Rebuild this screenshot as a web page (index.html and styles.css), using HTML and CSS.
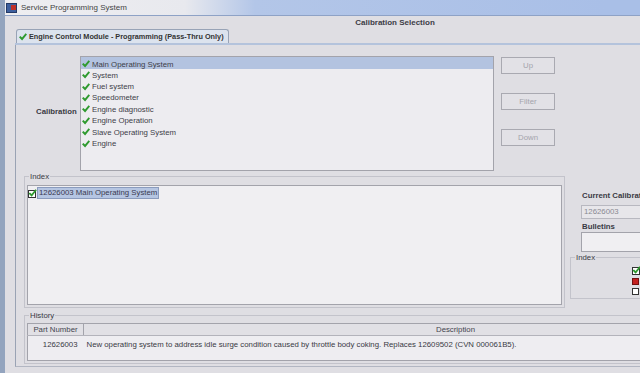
FILE: index.html
```html
<!DOCTYPE html>
<html lang="en">
<head>
    <meta charset="UTF-8">
    <title>Service Programming System</title>
    <link rel="stylesheet" href="styles.css">
</head>
<body>
    <div class="window">
        <div class="titlebar">
            <span class="app_icon"><span class="app_icon_red"></span></span>
            <span class="title">Service Programming System</span>
        </div>
        <div class="header">Calibration Selection</div>
        <div class="tabs">
            <div class="tab">
                <svg class="check" viewBox="0 0 8 8"><path d="M0 4.3 L1.5 3.1 L3 4.6 L6.6 0.3 L8 1.4 L3.1 7.6 Z"/></svg>
                Engine Control Module - Programming (Pass-Thru Only)
            </div>
        </div>

        <div class="tab_body">
            <div class="calib_row">
                <div class="calib_label">Calibration</div>
                <ul class="calib_list">
                    <li class="selected"><svg class="check" viewBox="0 0 8 8"><path d="M0 4.3 L1.5 3.1 L3 4.6 L6.6 0.3 L8 1.4 L3.1 7.6 Z"/></svg>Main Operating System</li>
                    <li><svg class="check" viewBox="0 0 8 8"><path d="M0 4.3 L1.5 3.1 L3 4.6 L6.6 0.3 L8 1.4 L3.1 7.6 Z"/></svg>System</li>
                    <li><svg class="check" viewBox="0 0 8 8"><path d="M0 4.3 L1.5 3.1 L3 4.6 L6.6 0.3 L8 1.4 L3.1 7.6 Z"/></svg>Fuel system</li>
                    <li><svg class="check" viewBox="0 0 8 8"><path d="M0 4.3 L1.5 3.1 L3 4.6 L6.6 0.3 L8 1.4 L3.1 7.6 Z"/></svg>Speedometer</li>
                    <li><svg class="check" viewBox="0 0 8 8"><path d="M0 4.3 L1.5 3.1 L3 4.6 L6.6 0.3 L8 1.4 L3.1 7.6 Z"/></svg>Engine diagnostic</li>
                    <li><svg class="check" viewBox="0 0 8 8"><path d="M0 4.3 L1.5 3.1 L3 4.6 L6.6 0.3 L8 1.4 L3.1 7.6 Z"/></svg>Engine Operation</li>
                    <li><svg class="check" viewBox="0 0 8 8"><path d="M0 4.3 L1.5 3.1 L3 4.6 L6.6 0.3 L8 1.4 L3.1 7.6 Z"/></svg>Slave Operating System</li>
                    <li><svg class="check" viewBox="0 0 8 8"><path d="M0 4.3 L1.5 3.1 L3 4.6 L6.6 0.3 L8 1.4 L3.1 7.6 Z"/></svg>Engine</li>
                </ul>
                <div class="calib_buttons">
                    <button class="button" disabled>Up</button>
                    <button class="button" disabled>Filter</button>
                    <button class="button" disabled>Down</button>
                </div>
            </div>

            <div class="mid_row">
                <fieldset class="group index_group">
                    <legend>Index</legend>
                    <div class="index_list">
                        <div class="index_item">
                            <svg class="box_check" viewBox="0 0 9 9"><rect x="0.5" y="1.5" width="7" height="7" fill="#fff" stroke="#333"/><path d="M0.5 4.6 L2 3.4 L3.6 5 L7.4 0.2 L8.8 1.3 L3.7 7.8 Z" fill="#2f9a2f"/></svg>
                            <span class="index_text">12626003 Main Operating System</span>
                        </div>
                    </div>
                </fieldset>
                <div class="side_panel">
                    <div class="side_label">Current Calibration</div>
                    <div class="side_input">12626003</div>
                    <div class="side_label bulletins">Bulletins</div>
                    <div class="side_box"></div>
                    <fieldset class="group legend_group">
                        <legend>Index</legend>
                        <div class="legend_icons">
                            <svg class="box_check" viewBox="0 0 9 9"><rect x="0.5" y="1.5" width="7" height="7" fill="#fff" stroke="#333"/><path d="M0.5 4.6 L2 3.4 L3.6 5 L7.4 0.2 L8.8 1.3 L3.7 7.8 Z" fill="#2f9a2f"/></svg>
                            <span class="red_box"></span>
                            <span class="white_box"></span>
                        </div>
                    </fieldset>
                </div>
            </div>

            <fieldset class="group history_group">
                <legend>History</legend>
                <table class="history">
                    <colgroup>
                        <col class="col_part">
                        <col>
                    </colgroup>
                    <tr>
                        <th>Part Number</th>
                        <th>Description</th>
                    </tr>
                    <tr>
                        <td class="num">12626003</td>
                        <td>New operating system to address idle surge condition caused by throttle body coking. Replaces 12609502 (CVN 000061B5).</td>
                    </tr>
                    <tr class="empty_row"><td></td><td></td></tr>
                </table>
            </fieldset>
        </div>
    </div>
</body>
</html>
```

FILE: styles.css
```css
body{
    margin: 0;
    background-color: #dcdbe0;
    font-family: "Liberation Sans", Arial, sans-serif;
    font-size: 7.8px;
    color: #3a3a44;
    overflow: hidden;
}
.window{
    width: 830px;
    height: 373px;
    border-left: 5px solid #93a4be;
    background-color: #dfdee3;
}
.titlebar{
    height: 16px;
    display: flex;
    align-items: center;
    background: linear-gradient(to right, #eeeef1 0px, #e8e9ee 180px, #b3c6e8 250px, #a9bfe7 600px);
    border-bottom: 1px solid #8ea2c6;
    box-sizing: border-box;
}
.app_icon{
    width: 11px;
    height: 10px;
    margin-left: 1px;
    background-color: #3d5f9e;
    border: 1px solid #243a66;
    box-sizing: border-box;
    display: flex;
    justify-content: flex-end;
}
.app_icon_red{
    width: 5px;
    height: 5px;
    margin-top: 1px;
    background-color: #c03028;
}
.title{
    margin-left: 4px;
    font-size: 8px;
    color: #444;
}
.header{
    height: 13px;
    line-height: 13px;
    width: 780px;
    text-align: center;
    font-weight: bold;
    font-size: 8px;
    color: #3c3c46;
}
.tabs{
    height: 14px;
    margin-left: 10px;
    border-bottom: 2px solid #b4c3dc;
    display: flex;
}
.tab{
    height: 14px;
    width: 213px;
    margin-left: 1px;
    box-sizing: border-box;
    background-color: #dce3ee;
    border: 1px solid #98a3b6;
    border-bottom: none;
    border-radius: 3px 3px 0 0;
    display: flex;
    align-items: center;
    padding-left: 2px;
    font-weight: bold;
    font-size: 7.3px;
    white-space: nowrap;
    color: #333;
}
.check{
    width: 8px;
    height: 8px;
    fill: #2f9a2f;
    margin-right: 2px;
    flex: none;
}
.tab_body{
    margin-left: 10px;
    border-left: 1px solid #9aa3b4;
    height: 322px;
    border-bottom: 1px solid #b2b6c2;
    box-sizing: border-box;
}
.calib_row{
    display: flex;
    padding-top: 11px;
}
.calib_label{
    width: 64px;
    display: flex;
    align-items: center;
    padding: 0 0 4px 20px;
    box-sizing: border-box;
    font-weight: bold;
    color: #3a3a44;
}
.calib_list{
    width: 414px;
    height: 115px;
    margin: 0;
    padding: 1px 0 0 0;
    box-sizing: border-box;
    background-color: #edecf0;
    border: 1px solid #a3a3ab;
    list-style: none;
}
.calib_list li{
    height: 11.4px;
    box-sizing: border-box;
    display: flex;
    align-items: center;
    padding: 1px 0 0 1px;
    color: #3e3e48;
}
.calib_list li.selected{
    height: 12px;
    margin-top: -1px;
    padding-top: 2px;
    background-color: #b3c3e0;
}
.calib_buttons{
    display: flex;
    flex-direction: column;
    gap: 19px;
    margin-left: 7px;
    padding-top: 1px;
}
.button{
    width: 54px;
    height: 17px;
    padding: 0;
    font-family: "Liberation Sans", Arial, sans-serif;
    font-size: 7.8px;
    color: #a4a4ac;
    background-color: #e2e1e6;
    border: 1px solid #a9a9b1;
    border-radius: 0;
}
.mid_row{
    display: flex;
    margin-top: 1px;
}
.group{
    margin: 0;
    padding: 0 2px 2px 2px;
    border: 1px solid #c3c3cb;
    min-width: 0;
}
.group legend{
    padding: 0 1px;
    margin-left: 2px;
    color: #3a3a44;
}
.index_group{
    margin-left: 8px;
    width: 541px;
    box-sizing: border-box;
    padding-top: 4px;
}
.index_list{
    height: 120px;
    background-color: #f0eff2;
    border: 1px solid #a3a3ab;
    box-sizing: border-box;
    padding: 2px 0;
}
.index_item{
    display: flex;
    align-items: center;
}
.box_check{
    width: 9px;
    height: 9px;
    flex: none;
}
.index_text{
    margin-left: 1px;
    background-color: #b5c5e2;
    outline: 1px solid #8a9bbd;
    padding: 0 1px;
    line-height: 10px;
    color: #3a3a50;
}
.side_panel{
    margin-left: 5px;
    padding-top: 19px;
    width: 190px;
}
.side_label{
    padding-left: 12px;
    font-weight: bold;
    color: #3a3a44;
    line-height: 10px;
}
.side_input{
    margin: 4px 0 0 11px;
    height: 14px;
    width: 160px;
    box-sizing: border-box;
    border: 1px solid #b8b8c0;
    background-color: #e7e6ea;
    line-height: 12px;
    padding-left: 2px;
    color: #8a8a92;
}
.bulletins{
    margin-top: 3px;
}
.side_box{
    margin-left: 11px;
    height: 20px;
    width: 160px;
    box-sizing: border-box;
    border: 1px solid #a3a3ab;
    background-color: #f0eff2;
}
.legend_group{
    margin-top: 1px;
    height: 46px;
    box-sizing: border-box;
}
.legend_icons{
    display: flex;
    flex-direction: column;
    gap: 3px;
    padding-left: 59px;
    padding-top: 4px;
}
.red_box{
    width: 7px;
    height: 7px;
    background-color: #c42020;
    border: 1px solid #701010;
    box-sizing: border-box;
}
.white_box{
    width: 7px;
    height: 7px;
    background-color: #fff;
    border: 1px solid #333;
    box-sizing: border-box;
}
.history_group{
    margin: 3px 0 0 8px;
    box-sizing: border-box;
    padding-top: 3px;
}
.history{
    width: 801px;
    table-layout: fixed;
    border-collapse: collapse;
    border: 1px solid #a3a3ab;
    background-color: #eeedf1;
}
.col_part{
    width: 56px;
}
.history th{
    height: 11px;
    padding: 0;
    font-weight: normal;
    color: #44444e;
    background-color: #e1e0e5;
    border-bottom: 1px solid #b3b3bb;
    border-left: 1px solid #a3a3ab;
}
.history td{
    height: 16px;
    padding: 0 0 0 3px;
    color: #3a3a44;
    white-space: nowrap;
}
.history td.num{
    text-align: right;
    padding: 0 6px 0 0;
}
.history .empty_row td{
    height: 8px;
}
```
